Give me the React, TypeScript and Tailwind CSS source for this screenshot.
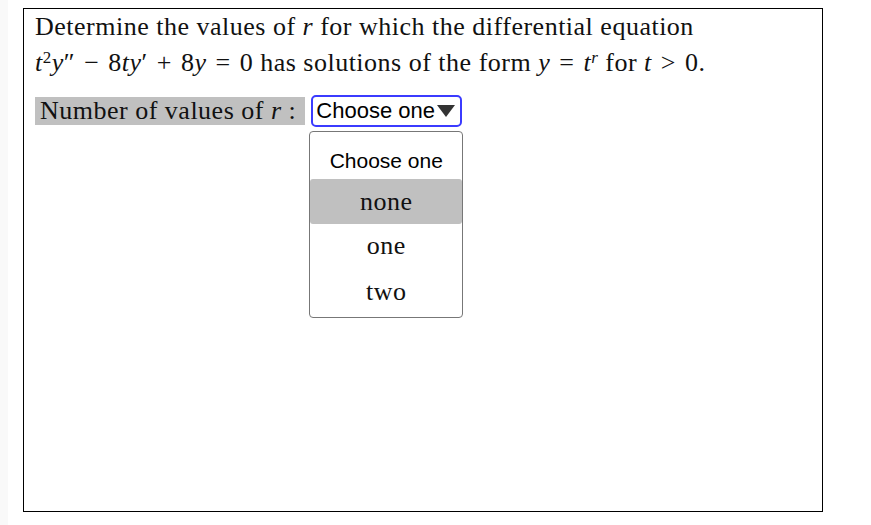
import React from "react";

const I = ({ children }: { children: React.ReactNode }) => (
  <span className="italic">{children}</span>
);

const Op = ({ children }: { children: React.ReactNode }) => (
  <span className="mx-[2px]">{children}</span>
);

export default function App() {
  return (
    <div className="w-[871px] h-[525px] bg-white flex overflow-hidden">
      <div className="w-[8px] h-full bg-[#f9f9f9] shrink-0" />
      <div className="pl-[15px] pt-[8px]">
        <div className="w-[800px] h-[504px] border border-black bg-white pl-[11px] pt-0 text-[26px] leading-[36px] tracking-[0.5px] text-[#111] [font-family:'Liberation_Serif',serif]">
          <div>
            Determine the values of <I>r</I> for which the differential equation
          </div>
          <div>
            <I>t</I>
            <sup className="text-[17px]">2</sup>
            <I>y</I>″ <Op>−</Op> 8<I>ty</I>′ <Op>+</Op> 8<I>y</I> <Op>=</Op> 0 has solutions of the form <I>y</I> <Op>=</Op> <I>t</I>
            <sup className="text-[17px] italic">r</sup> for <I>t</I> <Op>&gt;</Op> 0.
          </div>
          <div className="flex items-start mt-[14px]">
            <div className="bg-[#c0c0c0] h-[28px] leading-[28px] pl-[5px] pr-[9px] mt-[2px]">
              Number of values of <I>r</I> :
            </div>
            <div className="ml-[6px] relative">
              <div className="w-[151px] h-[32px] border-2 border-[#3b3bff] rounded-[5px] flex items-center pl-[3px] text-[22px] tracking-normal [font-family:'Liberation_Sans',sans-serif] text-black">
                <span>Choose one</span>
                <svg className="ml-[2px]" width="18" height="14" viewBox="0 0 18 14">
                  <polygon points="0,1 18,1 9,13" fill="#333" />
                </svg>
              </div>
              <div className="absolute left-[-2px] top-[36px] w-[154px] h-[187px] border border-[#777] rounded-[4px] bg-white flex flex-col pt-[10px]">
                <div className="h-[37px] flex items-center justify-center text-[21px] tracking-normal [font-family:'Liberation_Sans',sans-serif] text-black">
                  Choose one
                </div>
                <div className="h-[45px] bg-[#c0c0c0] rounded-[3px] flex items-center justify-center">
                  none
                </div>
                <div className="h-[44px] flex items-center justify-center">one</div>
                <div className="h-[48px] flex items-center justify-center">two</div>
              </div>
            </div>
          </div>
        </div>
      </div>
    </div>
  );
}
